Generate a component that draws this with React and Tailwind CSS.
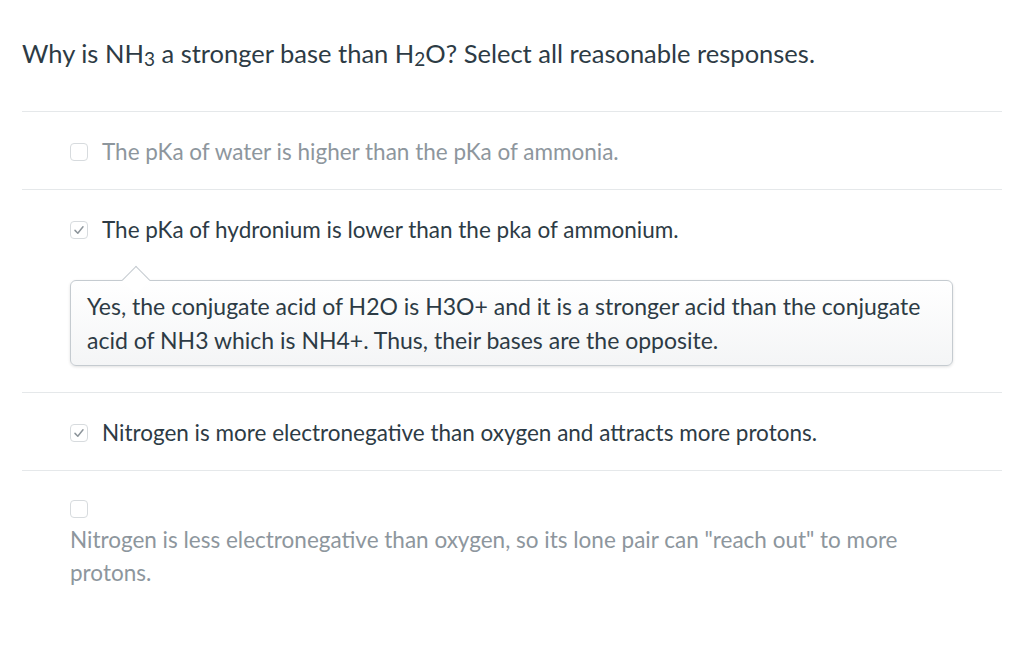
import React from 'react'

const Box = ({checked}) => (
  <span className="flex h-[18px] w-[18px] shrink-0 items-center justify-center rounded-[4px] border border-[#d7dbde] bg-white">
    {checked && (
      <svg width="12" height="12" viewBox="0 0 12 12" fill="none">
        <path d="M2 6.4 L4.8 9.2 L10 2.8" stroke="#8d959b" strokeWidth="1.5" strokeLinecap="round" strokeLinejoin="round" />
      </svg>
    )}
  </span>
)

const App = () => {
  return (
    <div className="min-h-screen bg-white px-[22px] text-[#2d3b45]" style={{fontFamily: 'Lato, "Open Sans", sans-serif'}}>
      {/* question */}
      <h1 className="pt-[37px] pb-[42px] text-[25.5px] leading-[32px] font-normal">
        Why is NH<sub className="relative top-[3px] align-baseline text-[19px] leading-none">3</sub> a stronger base than H<sub className="relative top-[3px] align-baseline text-[19px] leading-none">2</sub>O? Select all reasonable responses.
      </h1>

      {/* answer 1 */}
      <div className="border-t border-[#e5e8ea] pt-[26px] pb-[23px] pl-[48px]">
        <label className="flex items-center gap-[14px] text-[22.5px] leading-[28px] text-[#8d969d]">
          <Box checked={false} />
          The pKa of water is higher than the pKa of ammonia.
        </label>
      </div>

      {/* answer 2 + feedback */}
      <div className="border-t border-[#e5e8ea] pt-[26px] pb-[26px] pl-[48px] pr-[49px]">
        <label className="flex items-center gap-[14px] text-[22.5px] leading-[28px]">
          <Box checked={true} />
          The pKa of hydronium is lower than the pka of ammonium.
        </label>
        <div className="relative mt-[36px] rounded-[6px] border border-[#c5cbd0] bg-gradient-to-b from-white to-[#f4f5f6] px-[16px] pt-[8px] pb-[8px] text-[23px] leading-[34px] shadow-[0_1px_3px_rgba(0,0,0,0.12)]">
          <span className="absolute -top-[11px] left-[55px] h-[20px] w-[20px] rotate-45 border-t border-l border-[#c5cbd0] bg-white" />
          <p className="relative">
            Yes, the conjugate acid of H2O is H3O+ and it is a stronger acid than the conjugate acid of NH3 which is NH4+. Thus, their bases are the opposite.
          </p>
        </div>
      </div>

      {/* answer 3 */}
      <div className="border-t border-[#e5e8ea] pt-[26px] pb-[23px] pl-[48px]">
        <label className="flex items-center gap-[14px] text-[22.5px] leading-[28px]">
          <Box checked={true} />
          Nitrogen is more electronegative than oxygen and attracts more protons.
        </label>
      </div>

      {/* answer 4 */}
      <div className="border-t border-[#e5e8ea] pt-[29px] pb-[20px] pl-[48px] pr-[49px]">
        <label className="flex flex-wrap items-center gap-x-[14px] gap-y-[5px] text-[22.5px] leading-[33px] text-[#8d969d]">
          <Box checked={false} />
          <span>Nitrogen is less electronegative than oxygen, so its lone pair can "reach out" to more protons.</span>
        </label>
      </div>
    </div>
  )
}

export default App
